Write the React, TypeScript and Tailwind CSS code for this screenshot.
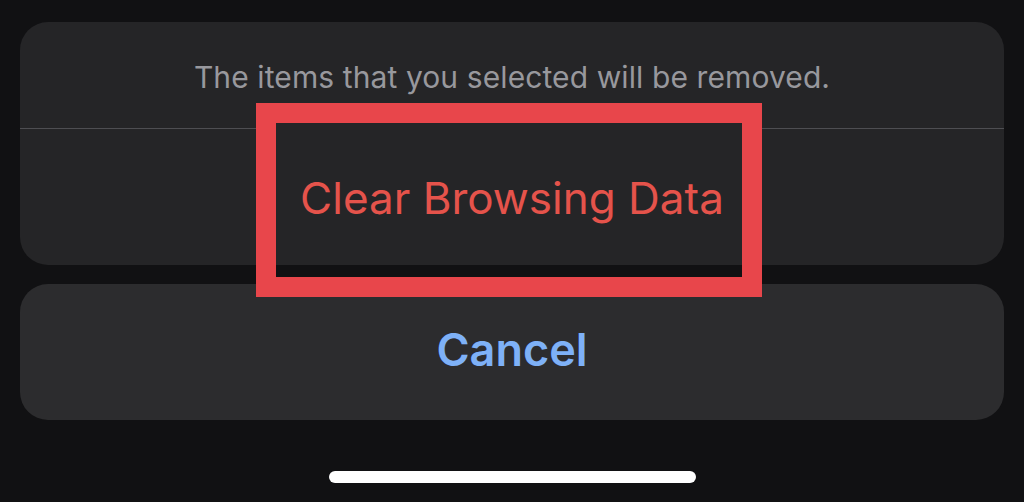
export default function App() {
  return (
    <div
      className="relative w-[1024px] h-[502px] overflow-hidden bg-[#111113] px-[20px] pt-[22px] flex flex-col"
      style={{ fontFamily: 'Inter, "Noto Sans", sans-serif' }}
    >
      <div className="flex flex-col rounded-[28px] bg-[#252527] h-[243px] overflow-hidden">
        <div className="h-[106px] flex items-center justify-center pt-[4px]">
          <span className="text-[30px] text-[#98989d] tracking-[0.1px]">
            The items that you selected will be removed.
          </span>
        </div>
        <div className="flex h-px">
          <div className="w-[236px] bg-[#4e4e52]" />
          <div className="w-[506px]" />
          <div className="flex-1 bg-[#4e4e52]" />
        </div>
        <div className="flex-1 flex items-center justify-center pt-[2px]">
          <span className="text-[44px] text-[#e5534b]">Clear Browsing Data</span>
        </div>
      </div>
      <div className="mt-[19px] rounded-[28px] bg-[#2c2c2e] h-[136px] flex items-center justify-center pb-[4px]">
        <span className="text-[45px] font-semibold text-[#7eb1f7]">Cancel</span>
      </div>
      <div className="mt-[51px] flex justify-center">
        <div className="w-[367px] h-[12px] rounded-full bg-white" />
      </div>
      <div className="absolute left-[256px] top-[103px] w-[506px] h-[194px] border-[20px] border-[#e8464b]" />
    </div>
  );
}
